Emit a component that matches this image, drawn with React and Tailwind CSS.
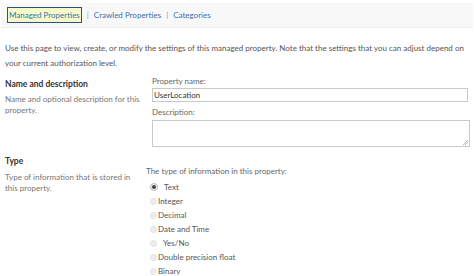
import React from "react";

const Radio = ({ checked, className = "" }) => (
  <span
    className={
      "inline-flex items-center justify-center rounded-full " +
      (checked
        ? "w-[8px] h-[8px] border border-[#b8b8b8] bg-[#f4f4f4] "
        : "w-[7px] h-[7px] border border-[#e2e2e2] bg-[#ededed] ") +
      className
    }
  >
    {checked && <span className="w-[4px] h-[4px] rounded-full bg-[#444]" />}
  </span>
);

const options = [
  { label: "Text", checked: true, wide: true },
  { label: "Integer" },
  { label: "Decimal" },
  { label: "Date and Time" },
  { label: "Yes/No", wide: true },
  { label: "Double precision float" },
  { label: "Binary" },
];

export default function App() {
  return (
    <div
      className="w-[474px] h-[276px] overflow-hidden bg-white text-[#555] text-[8px] leading-[11px]"
      style={{ fontFamily: 'Lato, "Noto Sans", sans-serif' }}
    >
      {/* tab strip */}
      <div className="mx-[1px] mt-[3px] h-[25px] bg-[#f8f8f8] border-b border-[#eeeeee] flex items-center pl-[6px] gap-[5px] text-[#3b6fb0]">
        <span className="px-[1px] py-[2px] border border-[#2f4f8a] bg-[#f5fbc8] leading-[10px]">
          Managed Properties
        </span>
        <span className="text-[#7aa0cc]">|</span>
        <span>Crawled Properties</span>
        <span className="text-[#7aa0cc]">|</span>
        <span>Categories</span>
      </div>

      <p className="px-[5px] mt-[13px] leading-[15px] text-[#555]">
        Use this page to view, create, or modify the settings of this managed property. Note that the settings that you can adjust depend on your current authorization level.
      </p>

      {/* name and description */}
      <div className="flex mt-[5px]">
        <div className="w-[146px] pl-[5px] pt-[3px]">
          <div className="font-bold text-[#333] text-[8.5px]">Name and description</div>
          <div className="mt-[4px] w-[136px] text-[#777] leading-[11px]">
            Name and optional description for this property.
          </div>
        </div>
        <div className="flex-1 pl-[6px] pr-[6px]">
          <div className="text-[#666]">Property name:</div>
          <div className="mt-[1px] h-[14px] border border-[#c9c9c9] flex items-center px-[1px] text-[#333]">
            UserLocation
          </div>
          <div className="mt-[5px] text-[#666]">Description:</div>
          <div className="mt-[2px] h-[27px] mr-[-2px] border border-[#c9c9c9] relative">
            <svg className="absolute right-[1px] bottom-[1px]" width="5" height="5" viewBox="0 0 5 5">
              <path d="M5 0 L0 5 M5 2 L2 5" stroke="#aaa" strokeWidth="0.8" />
            </svg>
          </div>
        </div>
      </div>

      {/* type */}
      <div className="flex mt-[9px]">
        <div className="w-[146px] pl-[5px]">
          <div className="font-bold text-[#333] text-[8.5px]">Type</div>
          <div className="mt-[5px] w-[136px] text-[#777]">
            Type of information that is stored in this property.
          </div>
        </div>
        <div className="flex-1 pt-[10px]">
          <div className="text-[#666]">The type of information in this property:</div>
          <div className="mt-[3px] flex flex-col">
            {options.map((o) => (
              <div key={o.label} className="h-[14px] flex items-center pl-[4px] text-[#555]">
                <Radio checked={o.checked} className={o.wide ? "mr-[6px]" : "mr-[1px]"} />
                {o.label}
              </div>
            ))}
          </div>
        </div>
      </div>
    </div>
  );
}
